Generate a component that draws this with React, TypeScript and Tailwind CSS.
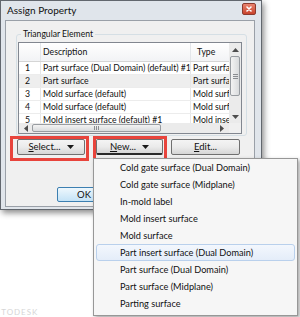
import React from "react";

function Caret({ className = "" }: { className?: string }) {
  return (
    <svg viewBox="0 0 7 4" className={`h-[4px] w-[7px] ${className}`} aria-hidden>
      <path d="M0 0h7L3.5 4z" fill="#1a1a1a" />
    </svg>
  );
}

function Arrow({ dir }: { dir: "up" | "down" | "left" | "right" }) {
  const d = {
    up: "M0 4L3.5 0 7 4z",
    down: "M0 0h7L3.5 4z",
    left: "M4 0v7L0 3.5z",
    right: "M0 0v7L4 3.5z",
  }[dir];
  const size = dir === "up" || dir === "down" ? "h-[4px] w-[7px]" : "h-[7px] w-[4px]";
  const vb = dir === "up" || dir === "down" ? "0 0 7 4" : "0 0 4 7";
  return (
    <svg viewBox={vb} className={size} aria-hidden>
      <path d={d} fill="#4d4d4d" />
    </svg>
  );
}

function WinButton({
  label,
  accel,
  caret,
  className = "",
}: {
  label: string;
  accel: string;
  caret?: boolean;
  className?: string;
}) {
  return (
    <div
      className={`flex h-[16px] items-center justify-center gap-[6px] rounded-[2px] border border-[#707070] bg-gradient-to-b from-[#f4f4f4] via-[#ebebeb] to-[#d6d6d6] text-[9.5px] leading-none text-[#111] ${className}`}
    >
      <span>
        <span className="underline underline-offset-1">{accel}</span>
        {label}
      </span>
      {caret && <Caret />}
    </div>
  );
}

const rows = [
  { n: "1", desc: "Part surface (Dual Domain) (default) #1", type: "Part surface" },
  { n: "2", desc: "Part surface", type: "Part surface", sel: true },
  { n: "3", desc: "Mold surface (default)", type: "Mold surface" },
  { n: "4", desc: "Mold surface (default)", type: "Mold surface" },
  { n: "5", desc: "Mold insert surface (default) #1", type: "Mold insert surface" },
];

const menuItems = [
  "Cold gate surface (Dual Domain)",
  "Cold gate surface (Midplane)",
  "In-mold label",
  "Mold insert surface",
  "Mold surface",
  "Part insert surface (Dual Domain)",
  "Part surface (Dual Domain)",
  "Part surface (Midplane)",
  "Parting surface",
];

function PropertyTable() {
  return (
    <div className="flex h-[92px] w-[224px] flex-col border border-[#828790] bg-white text-[8.7px]">
      <div className="flex min-h-0 flex-1">
        <div className="flex min-w-0 flex-1 flex-col overflow-hidden">
          <div className="flex h-[19px] shrink-0 items-center border-b border-[#d5d5d5] bg-gradient-to-b from-white to-[#f2f3f5]">
            <div className="h-full w-[22px] shrink-0 border-r border-[#e3e6ea]" />
            <div className="flex h-full w-[150px] shrink-0 items-center border-r border-[#e3e6ea] pl-[2px]">
              Description
            </div>
            <div className="flex h-full w-[60px] shrink-0 items-center pl-[6px]">Type</div>
          </div>
          {rows.map((r) => (
            <div
              key={r.n}
              className={`flex h-[13px] shrink-0 items-center border-b border-[#ececec] ${
                r.sel ? "bg-[#eeeeee]" : ""
              }`}
            >
              <div className="flex h-full w-[22px] shrink-0 items-center border-r border-[#e6e6e6] pl-[6px]">
                {r.n}
              </div>
              <div className="flex h-full w-[150px] shrink-0 items-center overflow-hidden whitespace-nowrap border-r border-[#e6e6e6] pl-[2px]">
                {r.desc}
              </div>
              <div className="flex h-full w-[60px] shrink-0 items-center overflow-hidden whitespace-nowrap pl-[2px]">
                {r.type}
              </div>
            </div>
          ))}
        </div>
        <div className="flex w-[12px] shrink-0 flex-col bg-[#ebebeb]">
          <div className="flex h-[13px] items-center justify-center">
            <Arrow dir="up" />
          </div>
          <div className="mx-[1px] flex h-[40px] items-center justify-center rounded-[2px] border border-[#989ca1] bg-gradient-to-r from-[#f3f3f3] to-[#d9dbdd]">
            <div className="flex flex-col gap-[1px]">
              <div className="h-px w-[5px] bg-[#8a8d91]" />
              <div className="h-px w-[5px] bg-[#8a8d91]" />
              <div className="h-px w-[5px] bg-[#8a8d91]" />
            </div>
          </div>
          <div className="flex-1" />
          <div className="flex h-[13px] items-center justify-center">
            <Arrow dir="down" />
          </div>
        </div>
      </div>
      <div className="flex h-[10px] shrink-0">
        <div className="flex flex-1 items-stretch bg-[#ebebeb]">
          <div className="flex w-[13px] items-center justify-center">
            <Arrow dir="left" />
          </div>
          <div className="my-[1px] flex w-[129px] items-center justify-center rounded-[2px] border border-[#989ca1] bg-gradient-to-b from-[#f3f3f3] to-[#d9dbdd]">
            <div className="flex gap-[1px]">
              <div className="h-[4px] w-px bg-[#8a8d91]" />
              <div className="h-[4px] w-px bg-[#8a8d91]" />
              <div className="h-[4px] w-px bg-[#8a8d91]" />
            </div>
          </div>
          <div className="flex-1" />
          <div className="flex w-[15px] items-center justify-center">
            <Arrow dir="right" />
          </div>
        </div>
        <div className="w-[12px] bg-[#f0f0f0]" />
      </div>
    </div>
  );
}

export default function App() {
  return (
    <div className="relative h-[317px] w-[300px] overflow-hidden bg-white font-['Lato',sans-serif] text-[9px] text-[#111]">
      {/* dialog */}
      <div className="flex h-[210px] w-[262px] flex-col border border-[#62676e] bg-[#e0e5eb] shadow-[2px_3px_6px_rgba(0,0,0,0.45)]">
        <div className="flex h-[19px] shrink-0 items-start justify-between">
          <span className="pl-[6px] pt-[3px] text-[10px] leading-[12px] text-[#111]">Assign Property</span>
          <div className="mr-[5px] mt-[2px] flex h-[12px] w-[14px] items-center justify-center rounded-[2px] border border-[#8b3a2e] bg-gradient-to-b from-[#e9836f] to-[#c8422b]">
            <svg viewBox="0 0 6 6" className="h-[6px] w-[6px]" aria-hidden>
              <path d="M1 1l4 4M5 1L1 5" stroke="#fff" strokeWidth="1.6" strokeLinecap="round" />
            </svg>
          </div>
        </div>
        <div className="mb-[2px] ml-[4px] mr-[6px] flex flex-1 flex-col border border-[#9aa0a8] bg-[#f0f0f0]">
          <fieldset className="ml-[10px] mr-[7px] mt-[7px] rounded-[3px] border border-[#d5dfe5] pb-[1px] pl-[1px] pr-[3px]">
            <legend className="ml-[3px] px-[2px] text-[8.6px] leading-[12px]">Triangular Element</legend>
            <div className="mt-[2px]">
              <PropertyTable />
            </div>
          </fieldset>
          <div className="ml-[4px] flex items-start gap-[4px]">
            <div className="h-[25px] w-[79px] border-[3px] border-[#e8443c] pl-[4px]">
              <WinButton label="elect..." accel="S" caret className="w-[68px]" />
            </div>
            <div className="h-[25px] w-[74px] border-[3px] border-[#e8443c]">
              <WinButton label="ew..." accel="N" caret className="w-[67px] border-b-2 border-b-[#2a2a2a]" />
            </div>
            <WinButton label="dit..." accel="E" className="mt-[3px] w-[69px]" />
          </div>
          <div className="ml-[51px] mt-[26px] flex h-[15px] w-[54px] items-center justify-center rounded-[2px] border border-[#3c7fb1] bg-gradient-to-b from-[#eef7fd] to-[#c4e3f6] text-[9.5px] leading-none">
            OK
          </div>
        </div>
      </div>

      <div className="-ml-[12px] mt-[97px] text-[8px] uppercase leading-[10px] tracking-[1px] text-[#d6d6d6]">
        Autodesk
      </div>

      {/* dropdown menu */}
      <div className="absolute left-[93px] top-[158px] flex h-[158px] w-[205px] flex-col border border-[#979797] bg-[#f6f6f6] pb-[3px] text-[9.2px] shadow-[2px_2px_4px_rgba(0,0,0,0.35)]">
        {menuItems.map((item, i) =>
          i === 5 ? (
            <div
              key={item}
              className="mx-[2px] flex h-[17px] shrink-0 items-center rounded-[3px] border border-[#b9d0ec] bg-gradient-to-b from-[#f3f7fd] to-[#e4edf9] pl-[23px]"
            >
              {item}
            </div>
          ) : (
            <div key={item} className="flex h-[17px] shrink-0 items-center pl-[26px]">
              {item}
            </div>
          )
        )}
      </div>
    </div>
  );
}
